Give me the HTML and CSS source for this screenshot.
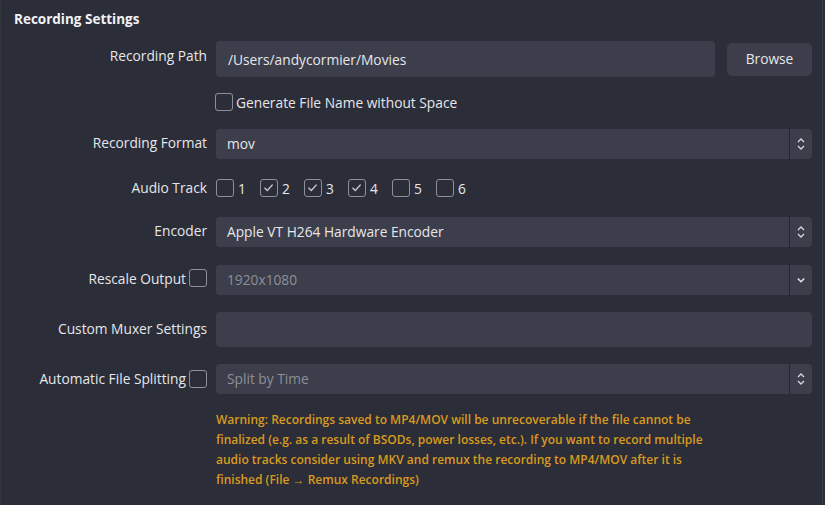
FILE: index.html
```html
<!DOCTYPE html>
<html>
<head>
<meta charset="utf-8">
<link rel="stylesheet" href="styles.css">
</head>
<body>
<div class="panel">
  <div class="title">Recording Settings</div>
  <div class="form">
    <div class="label first">Recording Path</div>
    <div class="ctrl path-row">
      <div class="input path">/Users/andycormier/Movies</div>
      <div class="button">Browse</div>
    </div>

    <div class="label"></div>
    <div class="ctrl check-line"><span class="cb"></span><span>Generate File Name without Space</span></div>

    <div class="label">Recording Format</div>
    <div class="ctrl select">
      <span class="val">mov</span>
      <span class="arrow"><svg width="10" height="14" viewBox="0 0 10 14"><path d="M2 5 L5 2 L8 5 M2 9 L5 12 L8 9" fill="none" stroke="#d8d9de" stroke-width="1.3"/></svg></span>
    </div>

    <div class="label flat">Audio Track</div>
    <div class="ctrl tracks">
      <span class="track"><span class="cb"></span>1</span>
      <span class="track"><span class="cb on"><svg width="17" height="17" viewBox="0 0 17 17"><path d="M4.5 8.8 L7.3 11.5 L12.6 5.6" fill="none" stroke="#c9cad0" stroke-width="1.4"/></svg></span>2</span>
      <span class="track"><span class="cb on"><svg width="17" height="17" viewBox="0 0 17 17"><path d="M4.5 8.8 L7.3 11.5 L12.6 5.6" fill="none" stroke="#c9cad0" stroke-width="1.4"/></svg></span>3</span>
      <span class="track"><span class="cb on"><svg width="17" height="17" viewBox="0 0 17 17"><path d="M4.5 8.8 L7.3 11.5 L12.6 5.6" fill="none" stroke="#c9cad0" stroke-width="1.4"/></svg></span>4</span>
      <span class="track"><span class="cb"></span>5</span>
      <span class="track"><span class="cb"></span>6</span>
    </div>

    <div class="label">Encoder</div>
    <div class="ctrl select">
      <span class="val">Apple VT H264 Hardware Encoder</span>
      <span class="arrow"><svg width="10" height="14" viewBox="0 0 10 14"><path d="M2 5 L5 2 L8 5 M2 9 L5 12 L8 9" fill="none" stroke="#d8d9de" stroke-width="1.3"/></svg></span>
    </div>

    <div class="label with-cb">Rescale Output<span class="cb"></span></div>
    <div class="ctrl select">
      <span class="val dim">1920x1080</span>
      <span class="arrow"><svg width="10" height="8" viewBox="0 0 10 8"><path d="M1.8 2.5 L5 5.7 L8.2 2.5" fill="none" stroke="#e4e5ea" stroke-width="1.5"/></svg></span>
    </div>

    <div class="label">Custom Muxer Settings</div>
    <div class="ctrl input muxer"></div>

    <div class="label with-cb flat">Automatic File Splitting<span class="cb"></span></div>
    <div class="ctrl select">
      <span class="val dim">Split by Time</span>
      <span class="arrow"><svg width="10" height="14" viewBox="0 0 10 14"><path d="M2 5 L5 2 L8 5 M2 9 L5 12 L8 9" fill="none" stroke="#d8d9de" stroke-width="1.3"/></svg></span>
    </div>

    <div class="label"></div>
    <div class="ctrl warning">Warning: Recordings saved to MP4/MOV will be unrecoverable if the file cannot be finalized (e.g. as a result of BSODs, power losses, etc.). If you want to record multiple audio tracks consider using MKV and remux the recording to MP4/MOV after it is finished (File → Remux Recordings)</div>
  </div>
</div>
</body>
</html>
```

FILE: styles.css
```css
html, body {
  margin: 0;
  padding: 0;
  background: #2a2c36;
}
body {
  width: 825px;
  height: 505px;
  overflow: hidden;
  font-family: "Open Sans", "Noto Sans", sans-serif;
  font-size: 13.75px;
  color: #e6e7ea;
}
.panel {
  box-sizing: border-box;
  width: 823px;
  height: 505px;
  background: #2b2d38;
  border-left: 1px solid #33353f;
  border-right: 1px solid #3a3c47;
  padding-right: 10px;
}
.title {
  height: 41px;
  box-sizing: border-box;
  padding: 10px 0 0 13px;
  font-weight: 700;
  font-size: 13.5px;
  color: #f2f2f4;
  line-height: 18px;
}
.form {
  display: grid;
  grid-template-columns: 206px 1fr;
  grid-template-rows: 36px 52px 30px 58px 30px 65px 35px 64px auto;
  column-gap: 9px;
  align-items: center;
}
.label {
  text-align: right;
  white-space: nowrap;
  display: flex;
  justify-content: flex-end;
  align-items: center;
  gap: 3px;
  margin-top: -3px;
}
.label.first {
  margin-top: -7px;
}
.label.flat {
  margin-top: -1px;
}
.ctrl {
  min-width: 0;
}
.path-row {
  display: flex;
  align-items: center;
  gap: 12px;
  height: 36px;
}
.input {
  background: #3c3e4b;
  border-radius: 4px;
  box-sizing: border-box;
}
.path {
  flex: 1;
  height: 36px;
  line-height: 37px;
  padding-left: 12px;
}
.button {
  width: 85px;
  height: 33px;
  line-height: 32px;
  text-align: center;
  background: #3c3e4b;
  border-radius: 5px;
}
.check-line {
  display: flex;
  align-items: center;
  gap: 3px;
  margin-left: -1px;
  margin-top: -2px;
}
.cb {
  display: inline-block;
  box-sizing: border-box;
  width: 18px;
  height: 18px;
  border: 1.5px solid #8e9099;
  border-radius: 3px;
  background: #2b2d38;
  position: relative;
  flex: none;
}
.cb svg {
  position: absolute;
  left: -1.5px;
  top: -1.5px;
}
.select {
  display: flex;
  align-items: stretch;
  height: 30px;
  background: #3c3e4b;
  border-radius: 4px;
}
.select .val {
  flex: 1;
  line-height: 30px;
  padding-left: 11px;
}
.select .dim {
  color: #8d8f98;
}
.select .arrow {
  width: 22px;
  border-left: 1px solid #24262f;
  display: flex;
  align-items: center;
  justify-content: center;
}
.tracks {
  display: flex;
  align-items: center;
  gap: 0;
  height: 30px;
}
.track {
  display: flex;
  align-items: center;
  gap: 4px;
  width: 44px;
}
.muxer {
  height: 35px;
}
.warning {
  align-self: start;
  margin-top: -1px;
  max-width: 490px;
  font-weight: 600;
  color: #d99a1e;
  line-height: 20px;
  font-size: 12px;
}
```
